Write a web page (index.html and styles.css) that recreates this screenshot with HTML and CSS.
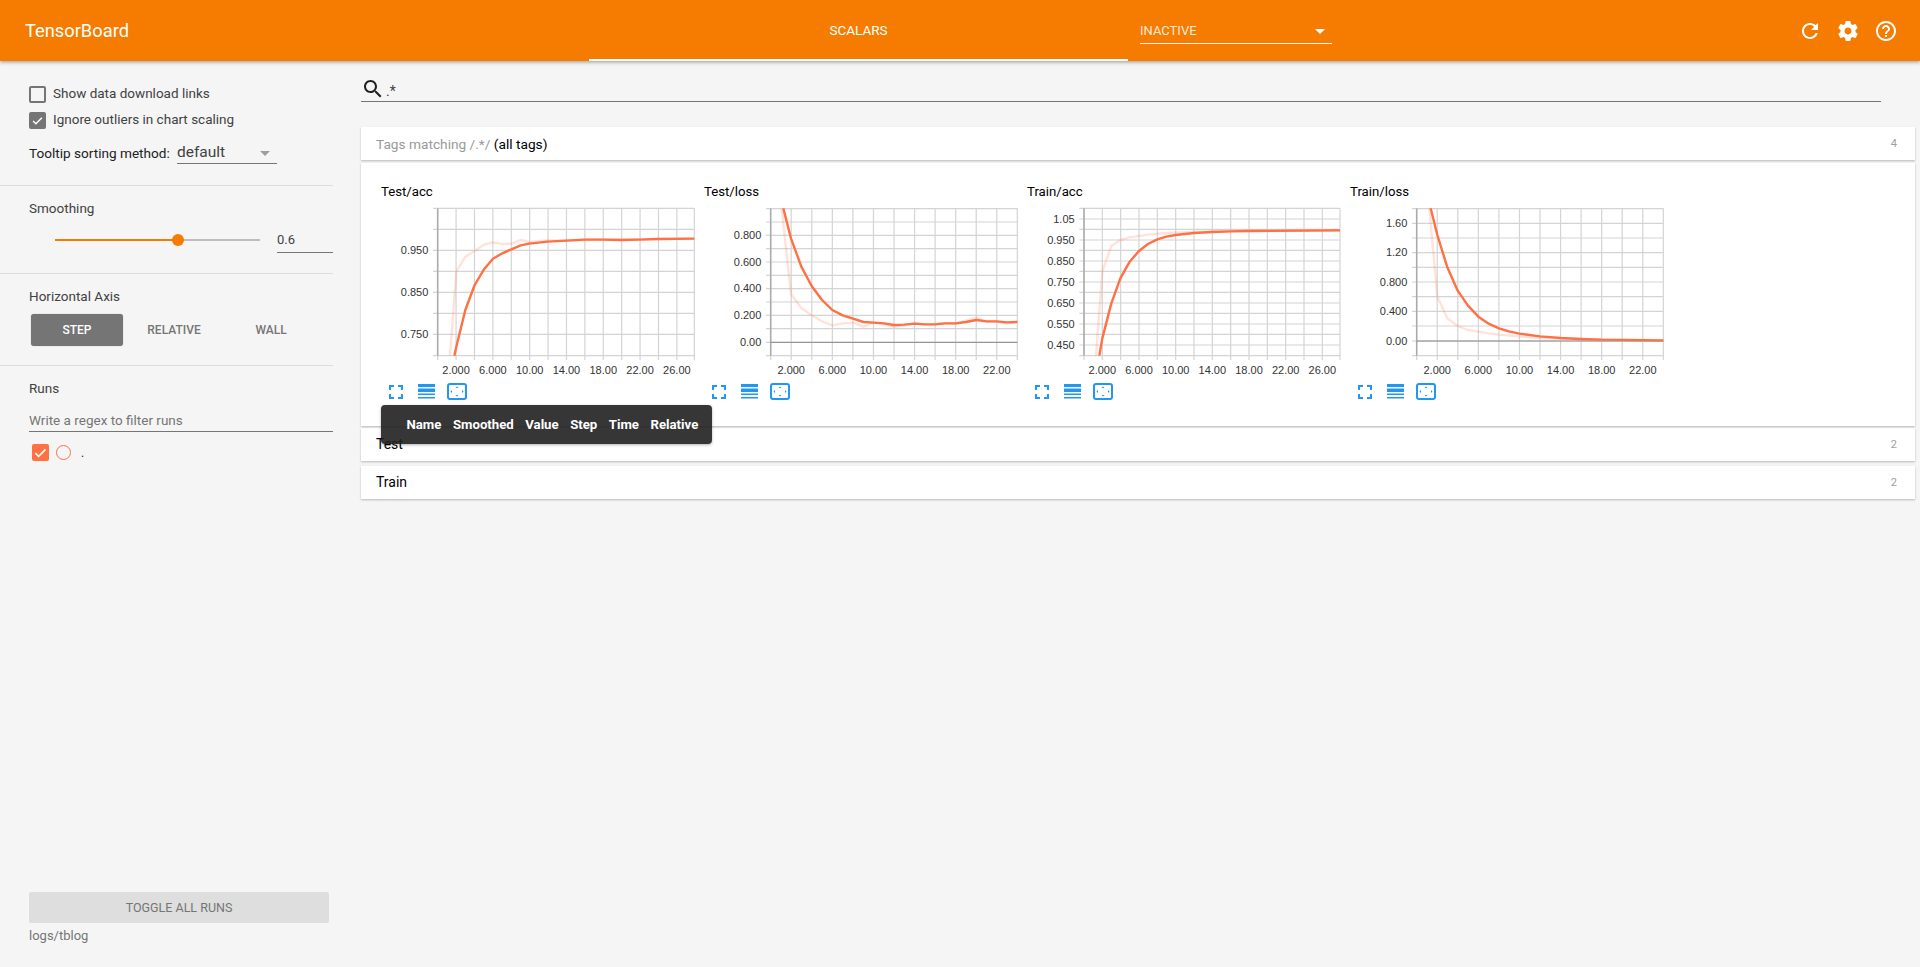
FILE: index.html
```html
<!DOCTYPE html>
<html lang="en">
<head>
<meta charset="utf-8">
<title>TensorBoard</title>
<link rel="stylesheet" href="styles.css">
</head>
<body>
<header class="topbar">
  <div class="brand">TensorBoard</div>
  <nav class="tabs"><div class="tab">SCALARS</div></nav>
  <div class="plugin-select"><span>INACTIVE</span><i class="caret caret-white"></i></div>
  <div class="top-icons">
    <svg class="top-icon" viewBox="0 0 24 24"><path d="M17.65 6.35C16.2 4.9 14.21 4 12 4c-4.42 0-7.99 3.58-7.99 8s3.57 8 7.99 8c3.73 0 6.84-2.55 7.73-6h-2.08c-.82 2.33-3.04 4-5.65 4-3.31 0-6-2.69-6-6s2.69-6 6-6c1.66 0 3.14.69 4.22 1.78L13 11h7V4l-2.35 2.35z"/></svg>
    <svg class="top-icon" viewBox="0 0 24 24"><path d="M19.43 12.98c.04-.32.07-.64.07-.98s-.03-.66-.07-.98l2.11-1.65c.19-.15.24-.42.12-.64l-2-3.46c-.12-.22-.39-.3-.61-.22l-2.49 1c-.52-.4-1.08-.73-1.69-.98l-.38-2.65C14.46 2.18 14.25 2 14 2h-4c-.25 0-.46.18-.49.42l-.38 2.65c-.61.25-1.17.59-1.69.98l-2.49-1c-.23-.09-.49 0-.61.22l-2 3.46c-.13.22-.07.49.12.64l2.11 1.65c-.04.32-.07.65-.07.98s.03.66.07.98l-2.11 1.65c-.19.15-.24.42-.12.64l2 3.46c.12.22.39.3.61.22l2.49-1c.52.4 1.08.73 1.69.98l.38 2.65c.03.24.24.42.49.42h4c.25 0 .46-.18.49-.42l.38-2.65c.61-.25 1.17-.59 1.69-.98l2.49 1c.23.09.49 0 .61-.22l2-3.46c.12-.22.07-.49-.12-.64l-2.11-1.65zM12 15.5c-1.93 0-3.5-1.57-3.5-3.5s1.57-3.5 3.5-3.5 3.5 1.57 3.5 3.5-1.57 3.5-3.5 3.5z"/></svg>
    <svg class="top-icon" viewBox="0 0 24 24"><path d="M11 18h2v-2h-2v2zm1-16C6.48 2 2 6.48 2 12s4.48 10 10 10 10-4.48 10-10S17.52 2 12 2zm0 18c-4.41 0-8-3.59-8-8s3.59-8 8-8 8 3.59 8 8-3.59 8-8 8zm0-14c-2.21 0-4 1.79-4 4h2c0-1.1.9-2 2-2s2 .9 2 2c0 2-3 1.75-3 5h2c0-2.25 3-2.5 3-5 0-2.21-1.79-4-4-4z"/></svg>
  </div>
</header>

<div class="layout">
  <aside class="sidebar">
    <section class="panel panel-options">
      <label class="check-row"><span class="box"></span><span class="check-text">Show data download links</span></label>
      <label class="check-row"><span class="box box-on"><svg viewBox="0 0 24 24"><path d="M9 16.2 4.8 12l-1.9 1.9L9 20 21 8l-1.9-1.9z"/></svg></span><span class="check-text">Ignore outliers in chart scaling</span></label>
      <div class="sort-row">
        <span class="sort-label">Tooltip sorting method:</span>
        <div class="sort-select"><span>default</span><i class="caret caret-grey"></i></div>
      </div>
    </section>
    <section class="panel panel-smoothing">
      <div class="panel-title">Smoothing</div>
      <div class="slider-row">
        <div class="slider"><div class="slider-fill"></div><div class="slider-knob"></div></div>
        <div class="slider-value">0.6</div>
      </div>
    </section>
    <section class="panel panel-axis">
      <div class="panel-title">Horizontal Axis</div>
      <div class="axis-buttons">
        <div class="axis-btn axis-btn-on">STEP</div>
        <div class="axis-btn">RELATIVE</div>
        <div class="axis-btn">WALL</div>
      </div>
    </section>
    <section class="panel-runs">
      <div class="panel-title">Runs</div>
      <div class="run-filter">Write a regex to filter runs</div>
      <div class="run-row">
        <span class="run-box"><svg viewBox="0 0 24 24"><path d="M9 16.2 4.8 12l-1.9 1.9L9 20 21 8l-1.9-1.9z"/></svg></span>
        <span class="run-radio"></span>
        <span class="run-name">.</span>
      </div>
    </section>
    <footer class="side-foot">
      <div class="toggle-btn">TOGGLE ALL RUNS</div>
      <div class="logdir">logs/tblog</div>
    </footer>
  </aside>

  <main class="content">
    <div class="search-row">
      <svg class="search-icon" viewBox="0 0 24 24"><path d="M15.5 14h-.79l-.28-.27C15.41 12.59 16 11.11 16 9.5 16 5.91 13.09 3 9.5 3S3 5.91 3 9.5 5.91 16 9.5 16c1.61 0 3.09-.59 4.23-1.57l.27.28v.79l5 4.99L20.49 19l-4.99-5zm-6 0C7.01 14 5 11.99 5 9.5S7.01 5 9.5 5 14 7.01 14 9.5 11.99 14 9.5 14z"/></svg>
      <span class="search-text">.*</span>
    </div>

    <div class="card card-tags">
      <span class="tags-title"><span class="muted">Tags matching /.*/</span> (all tags)</span>
      <span class="count">4</span>
    </div>

    <div class="card-charts">
      <div class="chart" data-chart="0">
        <div class="chart-title">Test/acc</div>
        <svg class="plot" width="323" height="172"></svg>
        <div class="tools">
          <svg class="tool-full" viewBox="0 0 24 24"><path d="M7 14H5v5h5v-2H7v-3zm-2-4h2V7h3V5H5v5zm12 7h-3v2h5v-5h-2v3zM14 5v2h3v3h2V5h-5z"/></svg>
          <svg class="tool-lines" viewBox="0 0 17 15"><path d="M0 0h17v3H0zM0 4.500h17v3.500H0zM0 9.500h17v1.500H0zM0 13h17v1.500H0z"/></svg>
          <svg class="tool-fit" viewBox="0 0 20 17"><rect x="1" y="1" width="18" height="15" rx="2"/><path class="tool-fit-arrows" d="M10 3.500l1.500 1.500h-3zM10 13.500l1.500-1.500h-3zM3.500 8.500l1.500-1.500v3zM16.500 8.500l-1.500-1.500v3z"/></svg>
        </div>
      </div>
      <div class="chart" data-chart="1">
        <div class="chart-title">Test/loss</div>
        <svg class="plot" width="323" height="172"></svg>
        <div class="tools">
          <svg class="tool-full" viewBox="0 0 24 24"><path d="M7 14H5v5h5v-2H7v-3zm-2-4h2V7h3V5H5v5zm12 7h-3v2h5v-5h-2v3zM14 5v2h3v3h2V5h-5z"/></svg>
          <svg class="tool-lines" viewBox="0 0 17 15"><path d="M0 0h17v3H0zM0 4.500h17v3.500H0zM0 9.500h17v1.500H0zM0 13h17v1.500H0z"/></svg>
          <svg class="tool-fit" viewBox="0 0 20 17"><rect x="1" y="1" width="18" height="15" rx="2"/><path class="tool-fit-arrows" d="M10 3.500l1.500 1.500h-3zM10 13.500l1.500-1.500h-3zM3.500 8.500l1.500-1.500v3zM16.500 8.500l-1.500-1.500v3z"/></svg>
        </div>
      </div>
      <div class="chart" data-chart="2">
        <div class="chart-title">Train/acc</div>
        <svg class="plot" width="323" height="172"></svg>
        <div class="tools">
          <svg class="tool-full" viewBox="0 0 24 24"><path d="M7 14H5v5h5v-2H7v-3zm-2-4h2V7h3V5H5v5zm12 7h-3v2h5v-5h-2v3zM14 5v2h3v3h2V5h-5z"/></svg>
          <svg class="tool-lines" viewBox="0 0 17 15"><path d="M0 0h17v3H0zM0 4.500h17v3.500H0zM0 9.500h17v1.500H0zM0 13h17v1.500H0z"/></svg>
          <svg class="tool-fit" viewBox="0 0 20 17"><rect x="1" y="1" width="18" height="15" rx="2"/><path class="tool-fit-arrows" d="M10 3.500l1.500 1.500h-3zM10 13.500l1.500-1.500h-3zM3.500 8.500l1.500-1.500v3zM16.500 8.500l-1.500-1.500v3z"/></svg>
        </div>
      </div>
      <div class="chart" data-chart="3">
        <div class="chart-title">Train/loss</div>
        <svg class="plot" width="323" height="172"></svg>
        <div class="tools">
          <svg class="tool-full" viewBox="0 0 24 24"><path d="M7 14H5v5h5v-2H7v-3zm-2-4h2V7h3V5H5v5zm12 7h-3v2h5v-5h-2v3zM14 5v2h3v3h2V5h-5z"/></svg>
          <svg class="tool-lines" viewBox="0 0 17 15"><path d="M0 0h17v3H0zM0 4.500h17v3.500H0zM0 9.500h17v1.500H0zM0 13h17v1.500H0z"/></svg>
          <svg class="tool-fit" viewBox="0 0 20 17"><rect x="1" y="1" width="18" height="15" rx="2"/><path class="tool-fit-arrows" d="M10 3.500l1.500 1.500h-3zM10 13.500l1.500-1.500h-3zM3.500 8.500l1.500-1.500v3zM16.500 8.500l-1.500-1.500v3z"/></svg>
        </div>
      </div>
      <div class="tooltip">
        <span>Name</span><span>Smoothed</span><span>Value</span><span>Step</span><span>Time</span><span>Relative</span>
      </div>
    </div>

    <div class="card card-test">
      <span class="group-name">Test</span>
      <span class="count">2</span>
    </div>
    <div class="card card-train">
      <span class="group-name">Train</span>
      <span class="count">2</span>
    </div>
  </main>
</div>
<script src="chart.js"></script>
</body>
</html>
```
FILE: styles.css
```css
* { box-sizing: border-box; }
html, body { margin: 0; height: 100%; overflow: hidden; }
body {
  background: #f5f5f5;
  font-family: Roboto, "Liberation Sans", sans-serif;
  font-size: 14px;
  color: #212121;
  display: flex;
  flex-direction: column;
}

/* top bar */
.topbar {
  height: 61px;
  flex: none;
  background: #f57c00;
  color: #fff;
  display: flex;
  align-items: stretch;
  box-shadow: 0 1px 4px rgba(0,0,0,.4);
  position: relative;
  z-index: 2;
}
.brand { width: 589px; padding-left: 25px; font-size: 18.3px; line-height: 61px; }
.tabs { width: 539px; display: flex; }
.tab {
  flex: 1;
  text-align: center;
  line-height: 61px;
  font-size: 13.5px;
  border-bottom: 2px solid #fff;
}
.plugin-select {
  width: 192px;
  height: 26px;
  margin: 18px 0 0 12px;
  padding-top: 5px;
  border-bottom: 1px solid #fff;
  display: flex;
  justify-content: space-between;
  font-size: 13px;
  color: rgba(255,255,255,.85);
}
.caret { display: block; width: 0; height: 0; border-left: 5px solid transparent; border-right: 5px solid transparent; }
.caret-white { border-top: 5px solid #fff; margin: 6px 7px 0 0; }
.top-icons { margin-left: auto; display: flex; align-items: center; gap: 14px; padding-right: 22px; }
.top-icon { width: 24px; height: 24px; fill: #fff; display: block; }

.layout { flex: 1; display: flex; min-height: 0; }

/* sidebar */
.sidebar { width: 350px; flex: none; display: flex; flex-direction: column; }
.panel, .panel-runs, .side-foot { width: 333px; padding-left: 29px; }
.panel { border-bottom: 1px solid #ddd; }
.panel-options { height: 125px; padding-top: 24px; }
.check-row {
  display: flex;
  align-items: center;
  height: 18px;
  margin-bottom: 8px;
  gap: 7px;
  font-size: 13.5px;
  color: #424242;
}
.check-text { padding-bottom: 2px; }
.box {
  width: 17px;
  height: 17px;
  border: 2px solid #757575;
  border-radius: 2px;
  display: block;
  flex: none;
}
.box-on { background: #757575; }
.box-on svg, .run-box svg { display: block; width: 100%; height: 100%; fill: #fff; }
.sort-row { display: flex; align-items: flex-end; height: 26px; margin-top: 9px; }
.sort-label { color: #212121; font-size: 13.6px; padding-bottom: 3px; width: 149px; flex: none; margin-right: -1px; }
.sort-select {
  width: 100px;
  height: 26px;
  padding-top: 5px;
  border-bottom: 1px solid #757575;
  display: flex;
  justify-content: space-between;
  font-size: 15.5px;
  color: #424242;
}
.caret-grey { border-top: 5px solid #9e9e9e; margin: 8px 7px 0 0; }

.panel-title { height: 16px; line-height: 16px; font-size: 13.5px; color: #424242; }
.panel-smoothing { height: 88px; padding-top: 14px; }
.slider-row { display: flex; height: 25px; margin-top: 12px; }
.slider { position: relative; width: 205px; height: 2px; margin: 11px 0 0 26px; background: #bdbdbd; flex: none; }
.slider-fill { height: 2px; width: 60%; background: #f57c00; }
.slider-knob { position: absolute; left: 117px; top: -5px; width: 12px; height: 12px; border-radius: 50%; background: #f57c00; }
.slider-value { width: 57px; margin-left: 17px; height: 25px; border-bottom: 1px solid #757575; line-height: 24px; font-size: 13px; color: #424242; }

.panel-axis { height: 92px; padding-top: 14px; }
.axis-buttons { display: flex; margin: 10px 0 0 2px; }
.axis-btn {
  width: 92px;
  height: 32px;
  margin-right: 5px;
  text-align: center;
  line-height: 32px;
  font-size: 12px;
  font-weight: 500;
  color: #757575;
  border-radius: 3px;
}
.axis-btn-on { background: #757575; color: #fff; box-shadow: 0 0 1px rgba(0,0,0,.4); }

.panel-runs { padding-top: 14px; }
.run-filter {
  height: 24px;
  margin-top: 12px;
  border-bottom: 1px solid #757575;
  line-height: 24px;
  font-size: 13.5px;
  color: #757575;
}
.run-row { display: flex; align-items: center; height: 17px; margin: 12px 0 0 3px; }
.run-box { width: 17px; height: 17px; border-radius: 2px; background: #ff7043; display: block; padding: 1px; }
.run-radio { width: 15px; height: 15px; border: 1.5px solid #ff7043; border-radius: 50%; margin-left: 7px; }
.run-name { margin-left: 10px; font-size: 12px; line-height: 12px; color: #212121; }

.side-foot { margin-top: auto; padding-bottom: 23px; }
.toggle-btn {
  width: 300px;
  height: 31px;
  background: #dedede;
  border-radius: 2px;
  text-align: center;
  line-height: 31px;
  font-size: 12.5px;
  color: #757575;
}
.logdir { margin-top: 5px; height: 16px; line-height: 16px; font-size: 13px; color: #757575; }

/* main column */
.content { flex: 1; min-width: 0; padding: 16px 5px 0 11px; }
.search-row {
  height: 25px;
  margin: 0 34px 0 0;
  border-bottom: 1.5px solid #757575;
  display: flex;
  align-items: center;
}
.search-icon { width: 24px; height: 24px; fill: #212121; display: block; }
.search-text { margin-left: 1px; padding-top: 3px; color: #424242; }

.card {
  background: #fff;
  height: 33px;
  display: flex;
  align-items: center;
  justify-content: space-between;
  padding: 0 18px 0 15px;
  box-shadow: 0 1px 2px rgba(0,0,0,.25);
}
.card-tags { margin-top: 25px; }
.card-test { margin-top: 2px; }
.card-train { margin-top: 5px; }
.muted { color: #999; }
.tags-title { color: #000; font-size: 13.7px; }
.group-name { color: #000; font-size: 14px; padding-bottom: 2px; }
.count { font-size: 11px; color: #9e9e9e; }

.card-charts {
  position: relative;
  height: 263px;
  margin-top: 3px;
  padding: 21px 0 0 20px;
  background: #fff;
  box-shadow: 0 1px 2px rgba(0,0,0,.25);
  display: flex;
  align-items: flex-start;
}
.chart { width: 323px; flex: none; }
.chart-title { height: 16px; line-height: 16px; font-size: 13.2px; color: #000; }
.plot { display: block; margin-top: 5px; overflow: visible; }
.tools { display: flex; align-items: center; height: 17px; margin: 6px 0 0 7px; }
.tool-full { width: 24px; height: 24px; fill: #2196f3; margin-left: -4px; flex: none; }
.tool-lines { width: 17px; height: 15px; fill: #2196f3; margin-left: 10px; flex: none; }
.tool-fit { width: 20px; height: 17px; margin-left: 12px; fill: none; stroke: #2196f3; stroke-width: 2; flex: none; }
.tool-fit-arrows { fill: #2196f3; stroke: none; }

.grid-line { stroke: #d4d4d4; stroke-width: 1.2; }
.axis-left { stroke: #aaa; stroke-width: 1.5; }
.zero-line { stroke: #888; stroke-width: 1; }
.tick-text { font-family: "Liberation Sans", Arial, sans-serif; font-size: 11px; fill: #333; }
.curve { fill: none; stroke: #ff7043; stroke-width: 2.4; stroke-linejoin: round; }
.curve-raw { opacity: .2; }

.tooltip {
  position: absolute;
  left: 20px;
  top: 242px;
  width: 331px;
  height: 39px;
  padding-left: 25.5px;
  display: flex;
  align-items: center;
  gap: 11.5px;
  background: rgba(32,32,32,.9);
  border-radius: 4px;
  box-shadow: 0 1px 3px rgba(0,0,0,.3);
  color: #fff;
  font-size: 13.2px;
  font-weight: 700;
  z-index: 1;
}
```
FILE: chart.js
```js
var CHARTS = [
  { ox: -21, left: 233, right: 1003, step: 55.2,
    xLabels: ['2.000','6.000','10.00','14.00','18.00','22.00','26.00'],
    yGrid: [115,178,241,304,367,430,493],
    yLabels: [[241,'0.950'],[367,'0.850'],[493,'0.750']],
    smooth: [[283,557],[289,530],[316,420],[344,345],[372,298],[399,266],[427,250],[454,238],[482,226],[508,221],[563,215],[619,212],[673,209],[729,209],[784,210],[839,209],[893,207],[1003,206]],
    raw: [[270,557],[289,305],[316,260],[344,243],[372,224],[399,217],[427,222],[454,221],[482,210],[508,216],[563,211],[619,212],[673,210],[1003,206]] },
  { ox: -14, left: 242, right: 982, step: 61.67, zero: 517,
    xLabels: ['2.000','6.000','10.00','14.00','18.00','22.00'],
    yGrid: [116,156,196,236,276,316,356,396,436,476,517],
    yLabels: [[196,'0.800'],[276,'0.600'],[356,'0.400'],[436,'0.200'],[517,'0.00']],
    smooth: [[280,115],[303,205],[334,290],[365,348],[396,390],[427,420],[458,436],[489,446],[520,456],[551,458],[582,460],[612,465],[643,464],[674,461],[705,463],[735,463],[766,460],[797,460],[828,456],[859,450],[890,454],[920,454],[951,457],[982,456]],
    raw: [[275,115],[303,372],[334,414],[365,436],[396,454],[427,466],[458,460],[489,458],[520,470],[551,458],[582,463],[612,470],[643,466],[674,460],[705,463],[735,463],[766,459],[797,462],[828,452],[859,443],[890,456],[920,454],[951,461],[982,455]] },
  { ox: -17, left: 222, right: 990, step: 55,
    xLabels: ['2.000','6.000','10.00','14.00','18.00','22.00','26.00'],
    yGrid: [115,147,178,210,241,273,304,336,367,399,430,462,493,525],
    yLabels: [[147,'1.05'],[210,'0.950'],[273,'0.850'],[336,'0.750'],[399,'0.650'],[462,'0.550'],[525,'0.450']],
    smooth: [[268,557],[277,505],[304,400],[331,325],[359,275],[387,243],[414,222],[442,208],[469,200],[497,195],[552,189],[607,186],[662,184],[717,183],[990,181]],
    raw: [[258,557],[277,305],[304,228],[331,210],[359,202],[414,194],[469,189],[552,186],[662,183],[990,181]] },
  { ox: -10, left: 230, right: 970, step: 61.67, zero: 513,
    xLabels: ['2.000','6.000','10.00','14.00','18.00','22.00'],
    yGrid: [116,160,204,248,292,336,380,424,468,513],
    yLabels: [[160,'1.60'],[248,'1.20'],[336,'0.800'],[424,'0.400'],[513,'0.00']],
    smooth: [[272,115],[292,195],[322,292],[353,362],[384,407],[415,440],[446,461],[477,475],[507,484],[538,491],[600,499],[662,504],[724,507],[785,509],[970,511]],
    raw: [[268,115],[292,380],[322,445],[353,468],[384,480],[415,485],[446,490],[477,494],[538,499],[600,504],[724,508],[970,511]] }
];

var SVG_NS = 'http://www.w3.org/2000/svg';
var TOP = 115, BOTTOM = 557;

function el(svg, name, attrs, text) {
  var node = document.createElementNS(SVG_NS, name);
  for (var k in attrs) node.setAttribute(k, attrs[k]);
  if (text) node.textContent = text;
  svg.appendChild(node);
}

document.querySelectorAll('.chart').forEach(function (box) {
  var c = CHARTS[+box.getAttribute('data-chart')];
  var svg = box.querySelector('.plot');
  var X = function (v) { return +(c.ox + v / 3).toFixed(2); };
  var Y = function (v) { return +(v / 3 - 35).toFixed(2); };

  // horizontal grid lines plus their left ticks
  c.yGrid.concat([BOTTOM]).forEach(function (y) {
    el(svg, 'line', { 'class': 'grid-line', x1: X(c.left - 14), x2: X(c.right), y1: Y(y), y2: Y(y) });
  });
  // vertical grid lines plus their bottom ticks
  for (var i = 0; c.left + i * c.step <= c.right + 6; i++) {
    var x = Math.min(c.left + i * c.step, c.right);
    el(svg, 'line', { 'class': 'grid-line', x1: X(x), x2: X(x), y1: Y(TOP), y2: Y(BOTTOM + 13) });
  }
  el(svg, 'line', { 'class': 'axis-left', x1: X(c.left), x2: X(c.left), y1: Y(TOP), y2: Y(BOTTOM) });
  if (c.zero) el(svg, 'line', { 'class': 'zero-line', x1: X(c.left), x2: X(c.right), y1: Y(c.zero), y2: Y(c.zero) });

  c.yLabels.forEach(function (l) {
    el(svg, 'text', { 'class': 'tick-text', x: X(c.left - 28), y: Y(l[0] + 11), 'text-anchor': 'end' }, l[1]);
  });
  c.xLabels.forEach(function (t, n) {
    el(svg, 'text', { 'class': 'tick-text', x: X(c.left + (2 * n + 1) * c.step), y: Y(611), 'text-anchor': 'middle' }, t);
  });

  var pts = function (list) { return list.map(function (p) { return X(p[0]) + ',' + Y(p[1]); }).join(' '); };
  el(svg, 'polyline', { 'class': 'curve curve-raw', points: pts(c.raw) });
  el(svg, 'polyline', { 'class': 'curve', points: pts(c.smooth) });
});
```
